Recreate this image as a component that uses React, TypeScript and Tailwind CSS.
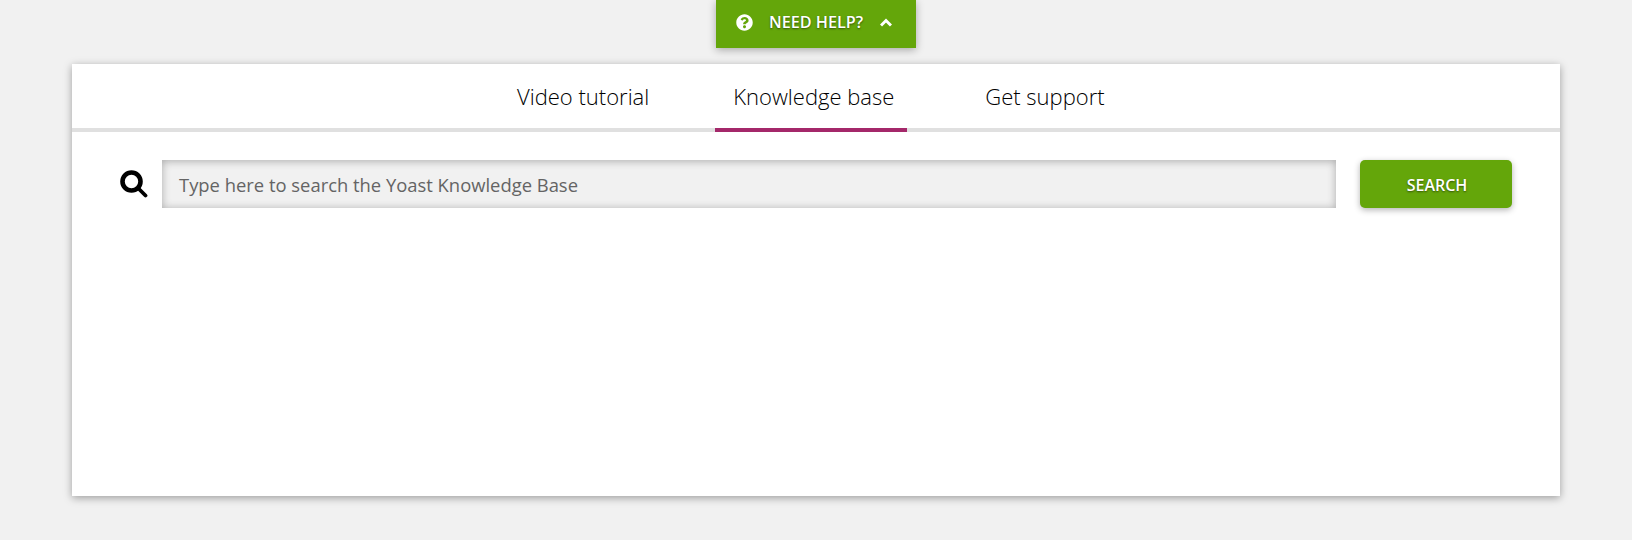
import React from 'react';
import { FaQuestionCircle } from 'react-icons/fa';

const tabs = [
  { label: 'Video tutorial', className: 'pr-[66px]', active: false },
  { label: 'Knowledge base', className: 'w-[192px] pl-[18px]', active: true },
  { label: 'Get support', className: 'pl-[78px]', active: false },
];

export default function App() {
  return (
    <div className="h-[540px] bg-[#f1f1f1] font-['Open_Sans',sans-serif] overflow-hidden">
      {/* Help toggle */}
      <div className="flex justify-center">
        <button className="flex items-center w-[200px] h-[48px] pl-[20px] pb-[4px] bg-[#64a60a] text-white shadow-[0_2px_8px_rgba(0,0,0,0.3)]">
          <FaQuestionCircle className="w-[17px] h-[17px]" />
          <span className="ml-[16px] text-[16.2px] font-semibold [text-shadow:0_1px_2px_rgba(0,0,0,0.5)]">
            NEED HELP?
          </span>
          <svg viewBox="0 0 12 9" className="ml-[17px] w-[12px] h-[9px]" fill="none" stroke="currentColor" strokeWidth="3">
            <path d="M1 7.5 L6 2.5 L11 7.5" />
          </svg>
        </button>
      </div>

      {/* Card */}
      <div className="mt-[16px] mx-[72px] h-[432px] bg-white shadow-[0_2px_8px_rgba(0,0,0,0.35)]">
        <div className="flex h-[68px] pl-[445px] border-b-4 border-[#e0e0e0]">
          {tabs.map((tab) => (
            <div
              key={tab.label}
              className={`flex items-center h-[68px] border-b-4 text-[22px] font-light text-black ${tab.className} ${
                tab.active ? 'border-[#a4286a]' : 'border-transparent'
              }`}
            >
              {tab.label}
            </div>
          ))}
        </div>

        <div className="flex items-center mt-[28px] px-[48px]">
          <svg viewBox="0 0 28 28" className="w-[28px] h-[28px] text-black" fill="none" stroke="currentColor">
            <circle cx="11.5" cy="11.5" r="9" strokeWidth="4.6" />
            <path d="M18.5 18.5 L25.5 25.5" strokeWidth="3.8" strokeLinecap="round" />
          </svg>
          <div className="flex items-center flex-1 h-[48px] ml-[14px] pl-[17px] pt-[1px] bg-[#f1f1f1] text-[#646464] text-[18.4px] shadow-[inset_0_1px_8px_rgba(0,0,0,0.3)]">
            Type here to search the Yoast Knowledge Base
          </div>
          <button className="w-[152px] h-[48px] ml-[24px] pl-[2px] pt-[1px] rounded-[5px] bg-[#64a60a] text-white text-[16px] font-semibold [text-shadow:0_1px_2px_rgba(0,0,0,0.5)] shadow-[0_2px_6px_rgba(0,0,0,0.3)]">
            SEARCH
          </button>
        </div>
      </div>
    </div>
  );
}
